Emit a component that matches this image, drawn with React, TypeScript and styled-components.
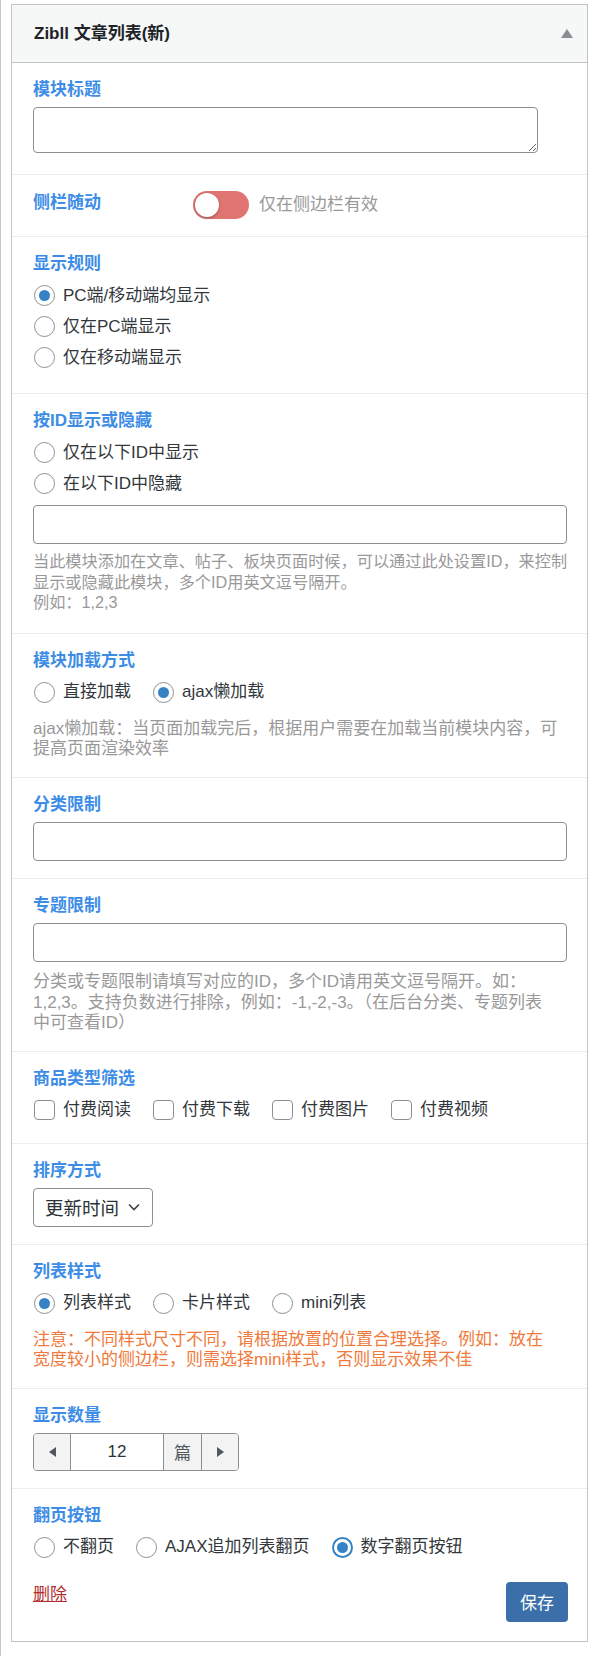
import React from "react";
import styled, { createGlobalStyle } from "styled-components";

const FONT = `"Liberation Sans", "Noto Sans CJK SC", "Noto Sans", sans-serif`;

const GlobalStyle = createGlobalStyle`
  html, body { margin: 0; padding: 0; background: #fff; }
  body { font-family: ${FONT}; color: #32373c; }
  *, *::before, *::after { box-sizing: border-box; }
`;

const Page = styled.div`
  min-height: 100vh;
  border-left: 1px solid #c8c8c8;
  padding: 4px 0 0 10px;
`;

const Panel = styled.div`
  width: 577px;
  border: 1px solid #c3c4c7;
  background: #fff;
`;

const Header = styled.div`
  height: 58px;
  border-bottom: 1px solid #c3c4c7;
  background: #f6f7f7;
  display: flex;
  align-items: center;
  justify-content: space-between;
  padding: 0 14px 0 22px;
`;

const HeaderTitle = styled.h3`
  margin: 0;
  font-size: 17px;
  font-weight: 700;
  line-height: 22px;
  color: #1d2327;
`;

const Section = styled.div<{ $pb?: number }>`
  padding: 16px 20px ${(p) => p.$pb ?? 17}px 21px;
  & + & {
    border-top: 1px solid #ececec;
  }
`;

const FieldTitle = styled.div`
  font-size: 17px;
  font-weight: 700;
  line-height: 22px;
  color: #3d8de6;
`;

const TextArea = styled.textarea`
  display: block;
  width: 505px;
  height: 46px;
  margin: 6px 0 4px;
  padding: 4px 8px;
  border: 1px solid #8c8f94;
  border-radius: 4px;
  font: inherit;
  background: #fff;
`;

const TextInput = styled.input<{ $mt: number }>`
  display: block;
  width: 100%;
  height: 39px;
  margin-top: ${(p) => p.$mt}px;
  padding: 0 8px;
  border: 1px solid #8c8f94;
  border-radius: 4px;
  font: inherit;
  font-size: 17px;
  background: #fff;
`;

const InlineRow = styled.div`
  display: flex;
  align-items: flex-start;
`;

const InlineTitle = styled(FieldTitle)`
  width: 160px;
  flex-shrink: 0;
  margin-top: 1px;
`;

const Switch = styled.span`
  display: flex;
  align-items: center;
  flex-shrink: 0;
  width: 56px;
  height: 28px;
  padding: 0 2px;
  border-radius: 14px;
  background: #df7471;
`;

const Knob = styled.span`
  width: 24px;
  height: 24px;
  border-radius: 50%;
  background: #fff;
  box-shadow: 0 1px 3px rgba(0, 0, 0, 0.3);
`;

const SwitchNote = styled.span`
  margin-left: 10px;
  font-size: 17px;
  line-height: 28px;
  color: #999;
`;

const Options = styled.div<{ $inline?: boolean }>`
  display: flex;
  flex-direction: ${(p) => (p.$inline ? "row" : "column")};
  align-items: flex-start;
  margin-top: 5px;
`;

const Option = styled.label`
  display: flex;
  align-items: center;
  height: 31px;
  margin-right: 21px;
  cursor: pointer;
`;

const RadioMark = styled.span<{ $focus?: boolean }>`
  display: flex;
  align-items: center;
  justify-content: center;
  flex-shrink: 0;
  width: 21px;
  height: 21px;
  margin-left: 1px;
  border-radius: 50%;
  border: ${(p) => (p.$focus ? "2px solid #3582c4" : "1px solid #8c8f94")};
  background: #fff;
`;

const RadioDot = styled.span`
  width: 11px;
  height: 11px;
  border-radius: 50%;
  background: #3582c4;
`;

const CheckMark = styled.span`
  flex-shrink: 0;
  width: 21px;
  height: 20px;
  margin-left: 1px;
  border: 1px solid #8c8f94;
  border-radius: 4px;
  background: #fff;
`;

const OptionText = styled.span`
  margin-left: 8px;
  font-size: 17px;
  line-height: 22px;
  color: #32373c;
  white-space: nowrap;
`;

const Help = styled.div<{ $mt: number; $size?: number; $warn?: boolean }>`
  margin-top: ${(p) => p.$mt}px;
  font-size: ${(p) => p.$size ?? 17}px;
  line-height: 20.6px;
  color: ${(p) => (p.$warn ? "#f07a3c" : "#999")};
  white-space: nowrap;
`;

const SelectBox = styled.div`
  display: inline-flex;
  align-items: center;
  width: 120px;
  height: 39px;
  margin-top: 6px;
  padding-left: 11px;
  border: 1px solid #8c8f94;
  border-radius: 4px;
  background: #fff;
  font-size: 18.5px;
  color: #2c3338;
  svg {
    margin-left: 9px;
  }
`;

const Spinner = styled.div`
  display: inline-flex;
  height: 38px;
  margin-top: 6px;
  border: 1px solid #8c8f94;
  border-radius: 4px;
  overflow: hidden;
  background: #fff;
`;

const SpinButton = styled.span<{ $side: "left" | "right" }>`
  display: flex;
  align-items: center;
  justify-content: center;
  width: 37px;
  background: #f3f3f3;
  ${(p) => (p.$side === "right" ? "border-left: 1px solid #8c8f94;" : "border-right: 1px solid #8c8f94;")}
`;

const SpinValue = styled.span`
  display: flex;
  align-items: center;
  justify-content: center;
  width: 92px;
  font-size: 17px;
  color: #2c3338;
`;

const SpinUnit = styled.span`
  display: flex;
  align-items: center;
  justify-content: center;
  width: 38px;
  border-left: 1px solid #8c8f94;
  background: #f3f3f3;
  font-size: 17px;
  color: #50575e;
`;

const Footer = styled.div`
  display: flex;
  justify-content: space-between;
  align-items: flex-start;
  margin-top: 19px;
`;

const DeleteLink = styled.a`
  margin-top: 2px;
  font-size: 17px;
  line-height: 22px;
  color: #b32d2e;
  text-decoration: underline;
  cursor: pointer;
`;

const SaveButton = styled.button`
  height: 40px;
  margin-right: -1px;
  padding: 0 14px;
  border: none;
  border-radius: 4px;
  background: #3a6fa9;
  color: #fff;
  font-family: inherit;
  font-size: 17px;
  cursor: pointer;
`;

type Item = { label: string; checked?: boolean; focus?: boolean };

const RadioGroup: React.FC<{ items: Item[]; inline?: boolean }> = ({ items, inline }) => (
  <Options $inline={inline}>
    {items.map((it) => (
      <Option key={it.label}>
        <RadioMark $focus={it.focus}>{it.checked && <RadioDot />}</RadioMark>
        <OptionText>{it.label}</OptionText>
      </Option>
    ))}
  </Options>
);

const CheckGroup: React.FC<{ items: string[] }> = ({ items }) => (
  <Options $inline>
    {items.map((label) => (
      <Option key={label}>
        <CheckMark />
        <OptionText>{label}</OptionText>
      </Option>
    ))}
  </Options>
);

const Caret = () => (
  <svg width="12" height="9" viewBox="0 0 12 9">
    <polygon points="6,0 12,9 0,9" fill="#8a8e93" />
  </svg>
);

const Chevron = () => (
  <svg width="12" height="8" viewBox="0 0 12 8">
    <polyline points="1,1.5 6,6.5 11,1.5" fill="none" stroke="#3c434a" strokeWidth="1.6" />
  </svg>
);

const Tri: React.FC<{ dir: "left" | "right" }> = ({ dir }) => (
  <svg width="7" height="10" viewBox="0 0 7 10">
    <polygon points={dir === "left" ? "7,0 7,10 0,5" : "0,0 0,10 7,5"} fill="#50575e" />
  </svg>
);

export default function App() {
  return (
    <>
      <GlobalStyle />
      <Page>
        <Panel>
          <Header>
            <HeaderTitle>Zibll 文章列表(新)</HeaderTitle>
            <Caret />
          </Header>

          <Section>
            <FieldTitle>模块标题</FieldTitle>
            <TextArea />
          </Section>

          <Section>
            <InlineRow>
              <InlineTitle>侧栏随动</InlineTitle>
              <Switch>
                <Knob />
              </Switch>
              <SwitchNote>仅在侧边栏有效</SwitchNote>
            </InlineRow>
          </Section>

          <Section $pb={20}>
            <FieldTitle>显示规则</FieldTitle>
            <RadioGroup
              items={[
                { label: "PC端/移动端均显示", checked: true },
                { label: "仅在PC端显示" },
                { label: "仅在移动端显示" },
              ]}
            />
          </Section>

          <Section $pb={20}>
            <FieldTitle>按ID显示或隐藏</FieldTitle>
            <RadioGroup items={[{ label: "仅在以下ID中显示" }, { label: "在以下ID中隐藏" }]} />
            <TextInput $mt={6} />
            <Help $mt={7} $size={16.2}>
              当此模块添加在文章、帖子、板块页面时候，可以通过此处设置ID，来控制
              <br />
              显示或隐藏此模块，多个ID用英文逗号隔开。
              <br />
              例如：1,2,3
            </Help>
          </Section>

          <Section>
            <FieldTitle>模块加载方式</FieldTitle>
            <RadioGroup inline items={[{ label: "直接加载" }, { label: "ajax懒加载", checked: true }]} />
            <Help $mt={11}>
              ajax懒加载：当页面加载完后，根据用户需要在加载当前模块内容，可
              <br />
              提高页面渲染效率
            </Help>
          </Section>

          <Section>
            <FieldTitle>分类限制</FieldTitle>
            <TextInput $mt={6} />
          </Section>

          <Section>
            <FieldTitle>专题限制</FieldTitle>
            <TextInput $mt={6} />
            <Help $mt={10}>
              分类或专题限制请填写对应的ID，多个ID请用英文逗号隔开。如：
              <br />
              1,2,3。支持负数进行排除，例如：-1,-2,-3。（在后台分类、专题列表
              <br />
              中可查看ID）
            </Help>
          </Section>

          <Section>
            <FieldTitle>商品类型筛选</FieldTitle>
            <CheckGroup items={["付费阅读", "付费下载", "付费图片", "付费视频"]} />
          </Section>

          <Section>
            <FieldTitle>排序方式</FieldTitle>
            <SelectBox>
              更新时间
              <Chevron />
            </SelectBox>
          </Section>

          <Section>
            <FieldTitle>列表样式</FieldTitle>
            <RadioGroup
              inline
              items={[{ label: "列表样式", checked: true }, { label: "卡片样式" }, { label: "mini列表" }]}
            />
            <Help $mt={11} $warn>
              注意：不同样式尺寸不同，请根据放置的位置合理选择。例如：放在
              <br />
              宽度较小的侧边栏，则需选择mini样式，否则显示效果不佳
            </Help>
          </Section>

          <Section>
            <FieldTitle>显示数量</FieldTitle>
            <Spinner>
              <SpinButton $side="left">
                <Tri dir="left" />
              </SpinButton>
              <SpinValue>12</SpinValue>
              <SpinUnit>篇</SpinUnit>
              <SpinButton $side="right">
                <Tri dir="right" />
              </SpinButton>
            </Spinner>
          </Section>

          <Section $pb={19}>
            <FieldTitle>翻页按钮</FieldTitle>
            <RadioGroup
              inline
              items={[
                { label: "不翻页" },
                { label: "AJAX追加列表翻页" },
                { label: "数字翻页按钮", checked: true, focus: true },
              ]}
            />
            <Footer>
              <DeleteLink>删除</DeleteLink>
              <SaveButton>保存</SaveButton>
            </Footer>
          </Section>
        </Panel>
      </Page>
    </>
  );
}
